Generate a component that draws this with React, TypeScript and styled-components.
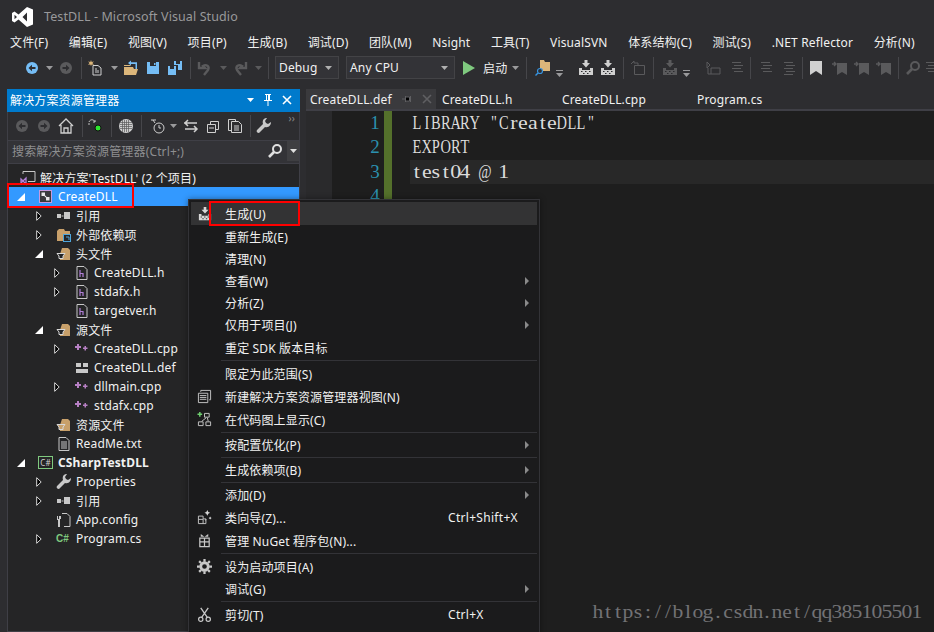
import React from 'react'
import styled, { createGlobalStyle } from 'styled-components'

const GlobalStyle = createGlobalStyle`
  html, body {
    margin: 0;
    padding: 0;
    height: 100%;
    background: #2d2d30;
    overflow: hidden;
  }
  * { box-sizing: border-box; }
  svg { display: block; flex: none; }
`

const uiFont = `"Noto Sans", "Noto Sans CJK SC", sans-serif`

const Page = styled.div`
  position: relative;
  width: 934px;
  height: 632px;
  overflow: hidden;
  background: #2d2d30;
  color: #f1f1f1;
  font-family: ${uiFont};
  font-size: 12px;
  letter-spacing: 0.15px;
`
const TitleBar = styled.div`
  display: flex;
  align-items: center;
  height: 32px;
  padding: 1px 0 0 12px;
`
const TitleText = styled.div`
  margin-left: 11px;
  font-size: 12.5px;
  color: #99999b;
  letter-spacing: 0.1px;
`
const MenuBar = styled.div`
  display: flex;
  align-items: center;
  height: 20px;
  padding-left: 10px;
  gap: 20.55px;
`
const MenuLabel = styled.div`
  white-space: nowrap;
  color: #f1f1f1;
`
const Toolbar = styled.div`
  display: flex;
  align-items: center;
  height: 31px;
  margin-bottom: 6px;
  white-space: nowrap;
  overflow: hidden;
`
const ToolCell = styled.div<{ $w: number }>`
  flex: none;
  width: ${(p) => p.$w}px;
  display: flex;
  align-items: center;
  justify-content: center;
`
const ToolSep = styled.div`
  width: 1px;
  height: 22px;
  background: #46464a;
`
const LowCaretBox = styled.div`
  margin-top: 12px;
`
const Gripper = styled.div`
  width: 4px;
  height: 20px;
  background-image: radial-gradient(#55555a 40%, transparent 45%);
  background-size: 2px 2px;
`
const Combo = styled.div<{ $w: number; $left?: number }>`
  flex: none;
  width: ${(p) => p.$w}px;
  height: 23px;
  margin-left: ${(p) => p.$left ?? 0}px;
  display: flex;
  align-items: center;
  justify-content: space-between;
  padding: 0 6px 0 3px;
  background: #333337;
  border: 1px solid #434346;
  color: #f1f1f1;
`
const StartLabel = styled.div`
  width: 27px;
  flex: none;
`
const Workspace = styled.div`
  display: flex;
  height: 543px;
  padding-left: 7px;
`
const Explorer = styled.div`
  width: 293px;
  flex: none;
  height: 100%;
  display: flex;
  flex-direction: column;
  background: #252526;
  border: 1px solid #3f3f46;
  border-top: 0;
`
const PanelTitle = styled.div`
  height: 23px;
  flex: none;
  display: flex;
  align-items: center;
  gap: 9px;
  padding: 0 8px 1px 3px;
  margin: 0 -1px;
  background: #007acc;
  color: #fff;
`
const TitleDots = styled.div`
  flex: 1;
  height: 5px;
  margin-left: -2px;
  background-image: radial-gradient(#59a8de 40%, transparent 45%);
  background-size: 2px 2px;
`
const PanelTools = styled.div`
  position: relative;
  height: 28px;
  flex: none;
  display: flex;
  align-items: center;
  padding-left: 4px;
  background: #2d2d30;
`
const ChevronMore = styled.div`
  position: absolute;
  right: 4px;
  top: 0;
  line-height: 12px;
  color: #8a8a8a;
  font-size: 10px;
`
const SearchBox = styled.div`
  height: 24px;
  flex: none;
  display: flex;
  align-items: center;
  padding: 0 0 2px 4px;
  background: #333337;
  border-top: 1px solid #3f3f46;
  border-bottom: 1px solid #3f3f46;
  gap: 4px;
`
const SearchText = styled.div`
  flex: 1;
  color: #8e8e90;
  font-size: 12px;
`
const SearchDrop = styled.div`
  width: 12px;
  height: 100%;
  display: flex;
  align-items: center;
  justify-content: center;
  background: #3f3f42;
`
const Tree = styled.div`
  flex: 1;
  padding-top: 4px;
`
const TreeRow = styled.div<{ $selected?: boolean }>`
  display: flex;
  align-items: center;
  height: 19px;
  background: ${(p) => (p.$selected ? '#3399ff' : 'transparent')};
  color: ${(p) => (p.$selected ? '#fff' : '#f1f1f1')};
`
const Expander = styled.div<{ $depth: number }>`
  flex: none;
  width: ${(p) => 12 + p.$depth * 18}px;
  padding-left: ${(p) => Math.max(p.$depth * 18 - 9, 0)}px;
  display: flex;
  justify-content: flex-start;
  align-items: center;
`
const OpenTriWrap = styled.div`
  margin-left: 1px;
`
const TreeIcon = styled.div`
  width: 16px;
  height: 16px;
  flex: none;
  margin-right: 4px;
  display: flex;
  align-items: center;
`
const TreeLabel = styled.div<{ $bold?: boolean }>`
  white-space: nowrap;
  font-weight: ${(p) => (p.$bold ? 700 : 400)};
`
const CsBox = styled.div`
  width: 15px;
  height: 13px;
  border: 1px solid #7fc97f;
  font-size: 8px;
  line-height: 11px;
  text-align: center;
  color: #d0d0d0;
`
const CsGlyph = styled.div`
  width: 16px;
  color: #7fc97f;
  font-family: "Liberation Sans", sans-serif;
  font-size: 10px;
  font-weight: 700;
  line-height: 16px;
`
const Editor = styled.div`
  flex: 1;
  margin-left: 6px;
  display: flex;
  flex-direction: column;
  min-width: 0;
`
const Tabs = styled.div`
  display: flex;
  height: 20px;
  flex: none;
`
const Tab = styled.div<{ $w: number; $active?: boolean }>`
  flex: none;
  width: ${(p) => p.$w}px;
  display: flex;
  align-items: center;
  padding-left: ${(p) => (p.$active ? 4 : 6)}px;
  gap: 10px;
  background: ${(p) => (p.$active ? '#3a3a3d' : 'transparent')};
  color: #f1f1f1;
`
const TabIcons = styled.div`
  display: flex;
  align-items: center;
  gap: 10px;
`
const TabRule = styled.div`
  height: 2px;
  background: #3f3f46;
  flex: none;
`
const Code = styled.div`
  flex: 1;
  display: flex;
  background: #1e1e1e;
`
const Margin = styled.div`
  width: 26px;
  flex: none;
  background: #2a2a2c;
`
const Numbers = styled.div`
  width: 48px;
  flex: none;
  font-family: "Liberation Serif", serif;
  font-size: 19px;
  color: #2b91af;
  text-align: right;
`
const LineNo = styled.div`
  height: 24.4px;
  line-height: 24px;
`
const ChangeBar = styled.div`
  width: 8px;
  height: 94px;
  flex: none;
  margin-left: 4px;
  background: #54702b;
`
const Lines = styled.div`
  flex: 1;
  padding-left: 20px;
  font-family: "Liberation Serif", serif;
  font-size: 19px;
  letter-spacing: 0;
  color: #dcdcdc;
`
const CodeLine = styled.div<{ $current?: boolean }>`
  height: 24.4px;
  line-height: 24px;
  white-space: pre;
  background: ${(p) => (p.$current ? '#282828' : 'transparent')};
  margin-left: ${(p) => (p.$current ? '-2px' : '0')};
  padding-left: ${(p) => (p.$current ? '2px' : '0')};
`
const MonoChar = styled.span<{ $cell: number; $scale: number }>`
  display: inline-flex;
  justify-content: center;
  width: ${(p) => p.$cell}px;
  transform: scaleX(${(p) => p.$scale});
  white-space: pre;
`
const ContextMenu = styled.div`
  position: absolute;
  left: 188px;
  top: 199px;
  width: 352px;
  height: 440px;
  padding: 2px;
  background: #1b1b1c;
  border: 1px solid #333337;
  box-shadow: 0 0 6px rgba(0, 0, 0, 0.4);
`
const MenuRow = styled.div<{ $h: number; $hot?: boolean }>`
  position: relative;
  display: flex;
  align-items: center;
  height: ${(p) => p.$h}px;
  background: ${(p) => (p.$hot ? '#333334' : 'transparent')};
  color: #f1f1f1;
`
const MenuIcon = styled.div`
  width: 27px;
  height: 100%;
  flex: none;
  display: flex;
  align-items: center;
  justify-content: center;
`
const MenuText = styled.div`
  margin-left: 7px;
  flex: 1;
  white-space: nowrap;
`
const Shortcut = styled.div`
  position: absolute;
  left: 257px;
  letter-spacing: 0.3px;
`
const SubArrow = styled.div`
  position: absolute;
  right: 8px;
  width: 0;
  height: 0;
  border-left: 4px solid #8a8a8a;
  border-top: 4px solid transparent;
  border-bottom: 4px solid transparent;
`
const MenuSepRow = styled.div`
  height: 1px;
  margin: 1px 0 1px 30px;
  background: #333337;
`
const RedBoxProject = styled.div`
  position: absolute;
  left: 7px;
  top: 183px;
  width: 127px;
  height: 25px;
  border: 2px solid #ff0000;
`
const RedBoxBuild = styled.div`
  position: absolute;
  left: 209px;
  top: 201px;
  width: 91px;
  height: 25px;
  border: 2px solid #ff0000;
`
const Watermark = styled.div`
  position: absolute;
  left: 593px;
  top: 602px;
  font-family: "Liberation Serif", serif;
  font-size: 18px;
  letter-spacing: 0;
  color: #727275;
  white-space: nowrap;
`

const Svg: React.FC<{ size?: number; children: React.ReactNode }> = ({ size = 16, children }) => (
  <svg width={size} height={size} viewBox="0 0 16 16" fill="none">
    {children}
  </svg>
)

const VsLogo = () => (
  <svg width="21" height="20" viewBox="0 0 21 20">
    <path
      fill="#fff"
      d="M15 0l6 2.500v15L15 20 6.500 12.500 2.500 15.500 0 14V6l2.500-1.500 4 3L15 0zM15 5.500L10.500 10l4.500 4.500v-9zM2.500 7.800v4.400L5 10 2.500 7.800z"
    />
  </svg>
)

const CircleArrow: React.FC<{ bg: string; fg: string; flip?: boolean }> = ({ bg, fg, flip }) => (
  <Svg>
    <g transform={flip ? 'matrix(-1 0 0 1 16 0)' : undefined}>
      <circle cx="8" cy="8" r="6" fill={bg} />
      <path d="M4.500 8L8 4.800V7h3.500v2H8v2.200z" fill={fg} />
    </g>
  </Svg>
)

const NewItem = () => (
  <Svg>
    <path d="M5 5.500h5l3 2.500v7H5z" stroke="#d0d0d0" />
    <path d="M8 8v5M10 10v3" stroke="#d0d0d0" />
    <path d="M3 0l.7 2L6 1.500 4.400 3 6 4.800l-2.300-.4L3 6l-.7-1.600L0 4.800 1.600 3 0 1.500l2.300.5z" fill="#dcb67a" />
  </Svg>
)

const OpenFolder = () => (
  <Svg>
    <path d="M1 7h9l1 2h4l-2 6H1z" fill="#dcb67a" />
    <path d="M1 5h6l1 1H1z" fill="#dcb67a" />
    <path d="M5 3l3-2.500v1.700h6V9h-1.500V4H8v1.500z" fill="#75bdf5" />
  </Svg>
)

const Save = () => (
  <Svg>
    <path d="M2 2h12v12H2z" fill="#75bdf5" />
    <path d="M5 2h6v4H5z" fill="#2d2d30" />
    <path d="M9 3h1.500v2H9z" fill="#75bdf5" />
  </Svg>
)

const SaveAll = () => (
  <Svg>
    <path d="M1 6h8v9H1z" fill="#75bdf5" />
    <path d="M3 6h4v3H3z" fill="#2d2d30" />
    <path d="M7 1h8v9h-4V5H7z" fill="#75bdf5" />
    <path d="M9 1h4v3H9z" fill="#2d2d30" />
  </Svg>
)

const Undo: React.FC<{ flip?: boolean }> = ({ flip }) => (
  <Svg>
    <g transform={flip ? 'matrix(-1 0 0 1 16 0)' : undefined}>
      <path d="M2 2v6h6L6 6c3-2 7 0 5 4l-4 5" stroke="#5a5a5c" strokeWidth="2.400" />
    </g>
  </Svg>
)

const Play = () => (
  <Svg>
    <path d="M2 1l12 7-12 7z" fill="#7fc97f" />
  </Svg>
)

const Caret: React.FC<{ color?: string }> = ({ color = '#9a9a9c' }) => (
  <svg width="7" height="4" viewBox="0 0 7 4">
    <path d="M0 0h7L3.500 4z" fill={color} />
  </svg>
)

const OverflowCaret = () => (
  <LowCaretBox>
    <svg width="7" height="8" viewBox="0 0 7 8">
      <path d="M0 .5h7" stroke="#9a9a9c" />
      <path d="M0 3h7L3.500 7z" fill="#9a9a9c" />
    </svg>
  </LowCaretBox>
)

const FindFolder = () => (
  <Svg>
    <path d="M5 0h4l1 2h5v9H5z" fill="#dcb67a" />
    <circle cx="5" cy="11" r="2.500" fill="#2d2d30" stroke="#3794e0" strokeWidth="1.200" />
    <path d="M3 13l-2.500 2.500" stroke="#3794e0" strokeWidth="1.400" />
  </Svg>
)

const BuildIcon: React.FC<{ color?: string; bg?: string; size?: number }> = ({ color = '#d0d0d0', bg = '#2d2d30', size }) => (
  <Svg size={size}>
    <path d="M6.500 0h3v3H12L8 7.500 4 3h2.500z" fill={color} />
    <path d="M1 15V8h3v2h8V8h3v7z" fill={color} />
    <path d="M3 11.500h1.500M7 11.500h1.500M11 11.500h1.500M5 13.500h1.500M9 13.500h1.500" stroke={bg} strokeWidth="1.200" />
  </Svg>
)

const GhostA = () => (
  <Svg>
    <path d="M2 2l3 3-3 3zM6 8h9v6H6zM3 8v6h3" stroke="#5a5a5c" />
  </Svg>
)

const GhostLines: React.FC<{ lines?: number }> = ({ lines = 4 }) => (
  <Svg>
    {Array.from({ length: lines }).map((_, i) => (
      <path key={i} d={`M${i % 2 ? 6 : 4} ${2.5 + i * 3}h9`} stroke="#5a5a5c" />
    ))}
  </Svg>
)

const GhostFile = () => (
  <Svg>
    <path d="M4.500 5.500h10v9h-10zM1 4l3-3v2h4v3" stroke="#5a5a5c" />
  </Svg>
)

const Bookmark: React.FC<{ color?: string; mark?: boolean }> = ({ color = '#5a5a5c', mark }) => (
  <Svg>
    <path d={mark ? 'M5 3h10v12l-5-3-5 3z' : 'M2 1h12v14l-6-4-6 4z'} fill={color} />
    {mark && <path d="M0 4h4M2 2l2 2-2 2" stroke={color} strokeWidth="1.400" />}
  </Svg>
)

const Search: React.FC<{ color?: string }> = ({ color = '#e0e0e0' }) => (
  <Svg>
    <circle cx="10" cy="6" r="4" stroke={color} strokeWidth="2" />
    <path d="M7 9l-5 5" stroke={color} strokeWidth="2.600" />
  </Svg>
)

const Pin = () => (
  <svg width="10" height="12" viewBox="0 0 10 12">
    <path d="M2 0h6v1H7v5h2v1H1V6h2V1H2zM4 1v5h1V1zM4.500 7h1v5h-1z" fill="#fff" />
  </svg>
)

const CloseX: React.FC<{ color?: string }> = ({ color = '#fff' }) => (
  <svg width="10" height="10" viewBox="0 0 10 10">
    <path d="M1 1l8 8M9 1l-8 8" stroke={color} strokeWidth="1.600" />
  </svg>
)

const TabPin = () => (
  <svg width="10" height="10" viewBox="0 0 10 10">
    <path d="M0 5h3M3.500 2v6M3.500 3h4v4h-4M8.500 2v6" stroke="#5f5f62" />
  </svg>
)

const Home = () => (
  <Svg>
    <path d="M1 8l7-7 7 7M3 7v8h10V7M6 15v-5h4v5" stroke="#d0d0d0" strokeWidth="1.300" />
  </Svg>
)

const Sync = () => (
  <Svg>
    <path d="M2 4c1-3 5-3 6 0M8 2v2H6M2 5v2" stroke="#c0c0c0" />
    <circle cx="11" cy="10" r="3" fill="#2ee62e" stroke="#111" />
  </Svg>
)

const Globe = () => (
  <Svg>
    <circle cx="8" cy="8" r="7" fill="#d0d0d0" />
    <path d="M4.500 2v12M6.500 2v12M8.500 2v12M10.500 2v12M2 4.500h12M2 6.500h12M2 8.500h12M2 10.500h12" stroke="#5a5a5a" strokeWidth=".7" />
  </Svg>
)

const Clock = () => (
  <Svg>
    <circle cx="9" cy="10" r="5" stroke="#d0d0d0" />
    <path d="M9 7v3h2M1 2h5M3 2l2 3" stroke="#d0d0d0" />
  </Svg>
)

const Swap = () => (
  <Svg>
    <path d="M1 5h13M5 2L2 5l3 3M2 11h12M11 8l3 3-3 3" stroke="#d0d0d0" strokeWidth="1.500" />
  </Svg>
)

const Collapse = () => (
  <Svg>
    <path d="M2.500 6.500h8v8h-8zM5.500 6V3.500h8v8H11" stroke="#d0d0d0" />
    <path d="M4 10h5" stroke="#d0d0d0" />
  </Svg>
)

const Pages = () => (
  <Svg>
    <path d="M4 12.500H1.500v-11h7V3M4.500 3.500h7l3 3v8h-10z" stroke="#d0d0d0" />
    <path d="M7 8h5M7 10h5M7 12h5" stroke="#d0d0d0" />
  </Svg>
)

const Wrench: React.FC<{ color?: string }> = ({ color = '#c8c8c8' }) => (
  <Svg>
    <path d="M15 4l-3 2-2-1-1-2 2-3c-3 0-5 2-4 6L1 12c-1 1 0 3 2 3l6-6c4 1 6-2 6-5z" fill={color} />
  </Svg>
)

const SolutionIcon = () => (
  <Svg>
    <path d="M3 4V1.500h12v10H8" stroke="#c8c8c8" />
    <path d="M1 9l2 2 3-3v6l-3-3-2 2z" stroke="#b180d7" strokeWidth="1.300" />
  </Svg>
)

const CppProject = () => (
  <Svg>
    <rect x="1.500" y="1.500" width="12" height="12" fill="#3a3a3c" stroke="#c79be0" />
    <path d="M3.500 3.500h3.500v3.500H3.500zM8 8h3.500v3.500H8z" fill="#e8e8e8" />
    <path d="M7 7l1 1" stroke="#e8e8e8" strokeWidth="1.500" />
  </Svg>
)

const RefIcon = () => (
  <Svg>
    <path d="M1 6h4v4H1zM8 4h6v7H8z" fill="#c8c8c8" />
    <path d="M5.500 8h2" stroke="#c8c8c8" />
  </Svg>
)

const ExtDeps = () => (
  <Svg>
    <path d="M1 4l2-2h5l1 2h5v10H1z" fill="#c8a06a" />
    <rect x="7.500" y="7.500" width="7" height="7" fill="#252526" stroke="#4ea6dc" />
    <path d="M10 10h3v3" stroke="#4ea6dc" />
  </Svg>
)

const Filter: React.FC<{ full?: boolean }> = ({ full }) => (
  <Svg>
    <path d="M6 2h6l2 2v10H4V8z" fill="#c8a06a" />
    <path d="M1 7.500h8L7 10v2.500H3V10z" fill={full ? '#c8a06a' : '#252526'} stroke="#d8d8d8" />
  </Svg>
)

const HeaderFile = () => (
  <Svg>
    <path d="M3 1.500h7l3 3v10H3z" stroke="#c8c8c8" />
    <path d="M6 5v7M6 8.500h3v3.500" stroke="#b180d7" strokeWidth="1.200" />
  </Svg>
)

const CppFile = () => (
  <Svg>
    <path d="M3 3h2v2h2v2H5v2H3V7H1V5h2zM10.500 5h1.500v1.500h1.500V8H12v1.500h-1.500V8H9V6.500h1.500z" fill="#b780c4" />
  </Svg>
)

const DefFile = () => (
  <Svg>
    <path d="M2 3h5v4H2zM9 3h5v4H9zM2 9h12v4H2z" fill="#c8c8c8" />
  </Svg>
)

const TextFile = () => (
  <Svg>
    <path d="M3 1.500h7l3 3v10H3z" stroke="#c8c8c8" />
    <path d="M5 6h6M5 8h6M5 10h6M5 12h6" stroke="#c8c8c8" />
  </Svg>
)

const ConfigFile = () => (
  <Svg>
    <path d="M6 1.500h5l3 3v10H8" stroke="#c8c8c8" />
    <path d="M2 4v3h1V4h2v3H4v8H2V8H1V4z" fill="#c8c8c8" />
  </Svg>
)

const NewView = () => (
  <Svg size={15}>
    <path d="M4 3V1.500h10.500v10H13" stroke="#c8c8c8" />
    <path d="M1.500 4.500h10v10h-10z" stroke="#c8c8c8" />
    <path d="M3 7h7M3 9h7M3 11h7" stroke="#c8c8c8" />
  </Svg>
)

const CodeMap = () => (
  <Svg size={15}>
    <path d="M3 0v5M.5 2.500h5" stroke="#6fcf6f" strokeWidth="1.600" />
    <path d="M8 1.500h5v4H8zM1.500 10.500h5v4h-5zM9.500 10.500h5v4h-5zM10 6l-5 4M11 6l1 4" stroke="#c8c8c8" />
  </Svg>
)

const ClassWizard = () => (
  <Svg size={15}>
    <path d="M1.500 6.500h5v3h3v5h-8zM1.500 10h5v4.500" stroke="#c8c8c8" />
    <path d="M11 0l1 2 2 1-2 1-1 2-1-2-2-1 2-1zM14 7l.6 1 1 .6-1 .6-.6 1-.6-1-1-.6 1-.6zM9 9l.5 1 1 .5-1 .5-.5 1z" fill="#d8d8d8" />
  </Svg>
)

const Gift = () => (
  <Svg size={15}>
    <path d="M3 5.500h10v9H3zM8 5.500v9M3 9.500h10" stroke="#c8c8c8" strokeWidth="1.300" />
    <path d="M4 1l4 3 4-3v3H4z" fill="#c8c8c8" />
  </Svg>
)

const Gear = () => (
  <Svg size={15}>
    <circle cx="8" cy="8" r="4" stroke="#c8c8c8" strokeWidth="3" />
    <path d="M8 0v3M8 13v3M0 8h3M13 8h3M2.300 2.300l2 2M11.700 11.700l2 2M13.700 2.300l-2 2M4.300 11.700l-2 2" stroke="#c8c8c8" strokeWidth="2.400" />
  </Svg>
)

const Scissors = () => (
  <Svg size={15}>
    <path d="M4 1l7 10M12 1L5 11" stroke="#c8c8c8" strokeWidth="1.400" />
    <circle cx="4" cy="13" r="2.300" stroke="#c8c8c8" strokeWidth="1.300" />
    <circle cx="12" cy="13" r="2.300" stroke="#c8c8c8" strokeWidth="1.300" />
  </Svg>
)

const FillTri = () => (
  <svg width="8" height="8" viewBox="0 0 8 8">
    <path d="M8 0v8H0z" fill="#fff" />
  </svg>
)

const OpenTri = () => (
  <OpenTriWrap>
    <svg width="6" height="10" viewBox="0 0 6 10">
      <path d="M.7 .7l4.500 4.300L.7 9.300z" stroke="#d8d8d8" />
    </svg>
  </OpenTriWrap>
)

// fixed pitch serif, the editor font is not installed here
const MonoText: React.FC<{ text: string; cell: number; upper?: number; lower?: number }> = ({ text, cell, upper = 0.76, lower = 1.15 }) => (
  <>
    {Array.from(text).map((c, i) => (
      <MonoChar key={i} $cell={cell} $scale={/[A-Z@"]/.test(c) ? upper : lower}>
        {c}
      </MonoChar>
    ))}
  </>
)

type Cell = { w: number; node?: React.ReactNode; sep?: boolean }

const toolbarLeft: Cell[] = [
  { w: 10 },
  { w: 8, node: <Gripper /> },
  { w: 28, node: <CircleArrow bg="#75bdf5" fg="#2d2d30" /> },
  { w: 6, node: <Caret /> },
  { w: 28, node: <CircleArrow bg="#5a5a5c" fg="#2d2d30" flip /> },
  { w: 2, sep: true },
  { w: 28, node: <NewItem /> },
  { w: 8, node: <Caret /> },
  { w: 26, node: <OpenFolder /> },
  { w: 18, node: <Save /> },
  { w: 26, node: <SaveAll /> },
  { w: 4, sep: true },
  { w: 26, node: <Undo /> },
  { w: 10, node: <Caret color="#5a5a5c" /> },
  { w: 24, node: <Undo flip /> },
  { w: 12, node: <Caret color="#5a5a5c" /> },
  { w: 8, sep: true },
  { w: 3 },
]

const toolbarRight: Cell[] = [
  { w: 10, node: <Caret /> },
  { w: 12, sep: true },
  { w: 21, node: <FindFolder /> },
  { w: 12, node: <OverflowCaret /> },
  { w: 6, node: <Gripper /> },
  { w: 30, node: <BuildIcon /> },
  { w: 14, node: <BuildIcon /> },
  { w: 16, sep: true },
  { w: 14, node: <GhostFile /> },
  { w: 16, sep: true },
  { w: 17, node: <BuildIcon color="#5a5a5c" /> },
  { w: 16, node: <OverflowCaret /> },
  { w: 4, node: <Gripper /> },
  { w: 30, node: <GhostA /> },
  { w: 16, node: <GhostLines /> },
  { w: 12, sep: true },
  { w: 18, node: <GhostLines /> },
  { w: 27, node: <GhostLines lines={5} /> },
  { w: 2, sep: true },
  { w: 26, node: <Bookmark color="#d0d0d0" /> },
  { w: 22, node: <Bookmark mark /> },
  { w: 22, node: <Bookmark mark /> },
  { w: 22, node: <Bookmark mark /> },
  { w: 6, sep: true },
  { w: 24, node: <Search color="#5a5a5c" /> },
  { w: 10, node: <GhostLines /> },
]

const explorerCells: Cell[] = [
  { w: 20, node: <CircleArrow bg="#5a5a5c" fg="#2d2d30" /> },
  { w: 24, node: <CircleArrow bg="#5a5a5c" fg="#2d2d30" flip /> },
  { w: 20, node: <Home /> },
  { w: 12, sep: true },
  { w: 14, node: <Sync /> },
  { w: 18, sep: true },
  { w: 12, node: <Globe /> },
  { w: 18, sep: true },
  { w: 16, node: <Clock /> },
  { w: 14, node: <Caret /> },
  { w: 22, node: <Swap /> },
  { w: 22, node: <Collapse /> },
  { w: 22, node: <Pages /> },
  { w: 8, sep: true },
  { w: 20, node: <Wrench /> },
]

const menus = ['文件(F)', '编辑(E)', '视图(V)', '项目(P)', '生成(B)', '调试(D)', '团队(M)', 'Nsight', '工具(T)', 'VisualSVN', '体系结构(C)', '测试(S)', '.NET Reflector', '分析(N)']

type TreeItem = {
  depth: number
  icon: React.ReactNode
  label: string
  expand?: 'open' | 'closed'
  selected?: boolean
  bold?: boolean
}

const tree: TreeItem[] = [
  { depth: 0, icon: <SolutionIcon />, label: "解决方案'TestDLL' (2 个项目)" },
  { depth: 1, icon: <CppProject />, label: 'CreateDLL', expand: 'open', selected: true },
  { depth: 2, icon: <RefIcon />, label: '引用', expand: 'closed' },
  { depth: 2, icon: <ExtDeps />, label: '外部依赖项', expand: 'closed' },
  { depth: 2, icon: <Filter />, label: '头文件', expand: 'open' },
  { depth: 3, icon: <HeaderFile />, label: 'CreateDLL.h', expand: 'closed' },
  { depth: 3, icon: <HeaderFile />, label: 'stdafx.h', expand: 'closed' },
  { depth: 3, icon: <HeaderFile />, label: 'targetver.h' },
  { depth: 2, icon: <Filter />, label: '源文件', expand: 'open' },
  { depth: 3, icon: <CppFile />, label: 'CreateDLL.cpp', expand: 'closed' },
  { depth: 3, icon: <DefFile />, label: 'CreateDLL.def' },
  { depth: 3, icon: <CppFile />, label: 'dllmain.cpp', expand: 'closed' },
  { depth: 3, icon: <CppFile />, label: 'stdafx.cpp' },
  { depth: 2, icon: <Filter full />, label: '资源文件' },
  { depth: 2, icon: <TextFile />, label: 'ReadMe.txt' },
  { depth: 1, icon: <CsBox>C#</CsBox>, label: 'CSharpTestDLL', expand: 'open', bold: true },
  { depth: 2, icon: <Wrench />, label: 'Properties', expand: 'closed' },
  { depth: 2, icon: <RefIcon />, label: '引用', expand: 'closed' },
  { depth: 2, icon: <ConfigFile />, label: 'App.config' },
  { depth: 2, icon: <CsGlyph>C#</CsGlyph>, label: 'Program.cs', expand: 'closed' },
]

type MenuEntry =
  | { sep: true }
  | { sep?: false; label: string; h: number; icon?: React.ReactNode; shortcut?: string; sub?: boolean; hot?: boolean }

const contextMenu: MenuEntry[] = [
  { label: '生成(U)', h: 23, icon: <BuildIcon color="#d8d8d8" bg="#333334" size={14} />, hot: true },
  { label: '重新生成(E)', h: 23 },
  { label: '清理(N)', h: 22 },
  { label: '查看(W)', h: 22, sub: true },
  { label: '分析(Z)', h: 22, sub: true },
  { label: '仅用于项目(J)', h: 22, sub: true },
  { label: '重定 SDK 版本目标', h: 23 },
  { sep: true },
  { label: '限定为此范围(S)', h: 23 },
  { label: '新建解决方案资源管理器视图(N)', h: 23, icon: <NewView /> },
  { label: '在代码图上显示(C)', h: 23, icon: <CodeMap /> },
  { sep: true },
  { label: '按配置优化(P)', h: 22, sub: true },
  { sep: true },
  { label: '生成依赖项(B)', h: 22, sub: true },
  { sep: true },
  { label: '添加(D)', h: 22, sub: true },
  { label: '类向导(Z)...', h: 23, icon: <ClassWizard />, shortcut: 'Ctrl+Shift+X' },
  { label: '管理 NuGet 程序包(N)...', h: 23, icon: <Gift /> },
  { sep: true },
  { label: '设为启动项目(A)', h: 23, icon: <Gear /> },
  { label: '调试(G)', h: 22, sub: true },
  { sep: true },
  { label: '剪切(T)', h: 23, icon: <Scissors />, shortcut: 'Ctrl+X' },
]

const renderCells = (cells: Cell[]) =>
  cells.map((c, i) => (
    <ToolCell key={i} $w={c.w}>
      {c.sep ? <ToolSep /> : c.node}
    </ToolCell>
  ))

const App: React.FC = () => {
  return (
    <Page>
      <GlobalStyle />
      <TitleBar>
        <VsLogo />
        <TitleText>TestDLL - Microsoft Visual Studio</TitleText>
      </TitleBar>
      <MenuBar>
        {menus.map((m) => (
          <MenuLabel key={m}>{m}</MenuLabel>
        ))}
      </MenuBar>
      <Toolbar>
        {renderCells(toolbarLeft)}
        <Combo $w={64}>
          Debug
          <Caret color="#b0b0b0" />
        </Combo>
        <Combo $w={109} $left={7}>
          Any CPU
          <Caret color="#b0b0b0" />
        </Combo>
        <ToolCell $w={28}>
          <Play />
        </ToolCell>
        <StartLabel>启动</StartLabel>
        {renderCells(toolbarRight)}
      </Toolbar>
      <Workspace>
        <Explorer>
          <PanelTitle>
            <span>解决方案资源管理器</span>
            <TitleDots />
            <Caret color="#fff" />
            <Pin />
            <CloseX />
          </PanelTitle>
          <PanelTools>
            {renderCells(explorerCells)}
            <ChevronMore>››</ChevronMore>
          </PanelTools>
          <SearchBox>
            <SearchText>搜索解决方案资源管理器(Ctrl+;)</SearchText>
            <Search />
            <SearchDrop>
              <Caret color="#e0e0e0" />
            </SearchDrop>
          </SearchBox>
          <Tree>
            {tree.map((t, i) => (
              <TreeRow key={i} $selected={t.selected}>
                <Expander $depth={t.depth}>
                  {t.expand === 'open' && <FillTri />}
                  {t.expand === 'closed' && <OpenTri />}
                </Expander>
                <TreeIcon>{t.icon}</TreeIcon>
                <TreeLabel $bold={t.bold}>{t.label}</TreeLabel>
              </TreeRow>
            ))}
          </Tree>
        </Explorer>
        <Editor>
          <Tabs>
            <Tab $w={130} $active>
              <span>CreateDLL.def</span>
              <TabIcons>
                <TabPin />
                <CloseX color="#5f5f62" />
              </TabIcons>
            </Tab>
            <Tab $w={120}>CreateDLL.h</Tab>
            <Tab $w={135}>CreateDLL.cpp</Tab>
            <Tab $w={120}>Program.cs</Tab>
          </Tabs>
          <TabRule />
          <Code>
            <Margin />
            <Numbers>
              {[1, 2, 3, 4].map((n) => (
                <LineNo key={n}>{n}</LineNo>
              ))}
            </Numbers>
            <ChangeBar />
            <Lines>
              <CodeLine>
                <MonoText text={'LIBRARY "CreateDLL"'} cell={9.68} />
              </CodeLine>
              <CodeLine>
                <MonoText text="EXPORT" cell={9.68} />
              </CodeLine>
              <CodeLine $current>
                <MonoText text="test04 @ 1" cell={9.68} />
              </CodeLine>
              <CodeLine />
            </Lines>
          </Code>
        </Editor>
      </Workspace>

      <ContextMenu>
        {contextMenu.map((m, i) =>
          m.sep ? (
            <MenuSepRow key={i} />
          ) : (
            <MenuRow key={i} $h={m.h} $hot={m.hot}>
              <MenuIcon>{m.icon}</MenuIcon>
              <MenuText>{m.label}</MenuText>
              {m.shortcut && <Shortcut>{m.shortcut}</Shortcut>}
              {m.sub && <SubArrow />}
            </MenuRow>
          ),
        )}
      </ContextMenu>

      <RedBoxProject />
      <RedBoxBuild />
      <Watermark>
        <MonoText text="https://blog.csdn.net/qq385105501" cell={9.97} lower={1.2} />
      </Watermark>
    </Page>
  )
}

export default App
